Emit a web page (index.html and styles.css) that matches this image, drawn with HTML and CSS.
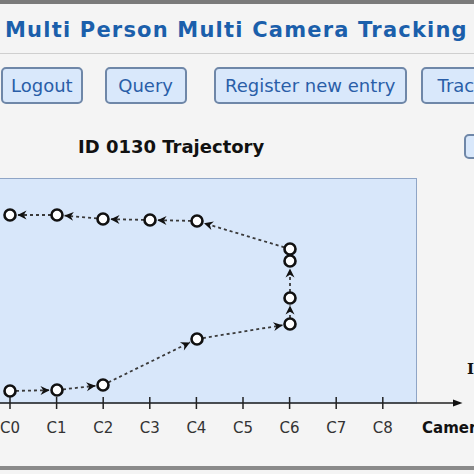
FILE: index.html
```html
<!DOCTYPE html>
<html>
<head>
<meta charset="utf-8">
<link rel="stylesheet" href="styles.css">
</head>
<body>
<div class="page">
  <header class="title-bar">
    <h1 class="title">Multi Person Multi Camera Tracking</h1>
  </header>
  <nav class="nav">
    <button class="btn btn-logout">Logout</button>
    <button class="btn btn-query">Query</button>
    <button class="btn btn-register">Register new entry</button>
    <button class="btn btn-track">Track</button>
  </nav>
  <div class="panel-head">
    <h2 class="panel-title">ID 0130 Trajectory</h2>
    <button class="btn btn-small"></button>
  </div>
  <svg class="chart" width="474" height="307" viewBox="0 160 474 307">
    <defs>
      <marker id="arr" markerUnits="userSpaceOnUse" markerWidth="12" markerHeight="12" refX="10" refY="6" orient="auto">
        <path d="M1,1.5 L10,6 L1,10.5 L3.8,6 Z" fill="#111"/>
      </marker>
    </defs>
    <rect class="plot-bg" x="-2" y="179.5" width="418.5" height="224.5"/>
    <g class="edges">
      <line x1="10" y1="392" x2="49.5" y2="391.2" marker-end="url(#arr)"/>
      <line x1="57" y1="391" x2="95.5" y2="386.8" marker-end="url(#arr)"/>
      <line x1="103" y1="386" x2="190" y2="343.4" marker-end="url(#arr)"/>
      <line x1="197" y1="340" x2="282.5" y2="326.2" marker-end="url(#arr)"/>
      <line x1="290" y1="325" x2="290" y2="306.5" marker-end="url(#arr)"/>
      <line x1="290" y1="299" x2="290" y2="269.5" marker-end="url(#arr)"/>
      <line x1="290" y1="250" x2="204" y2="224.2" marker-end="url(#arr)"/>
      <line x1="197" y1="222" x2="157.5" y2="221.2" marker-end="url(#arr)"/>
      <line x1="150" y1="221" x2="110.5" y2="220.2" marker-end="url(#arr)"/>
      <line x1="103" y1="220" x2="64.5" y2="216.6" marker-end="url(#arr)"/>
      <line x1="57" y1="216" x2="17.5" y2="216" marker-end="url(#arr)"/>
    </g>
    <g class="nodes">
      <circle cx="10" cy="216" r="5.5"/>
      <circle cx="57" cy="216" r="5.5"/>
      <circle cx="103" cy="220" r="5.5"/>
      <circle cx="150" cy="221" r="5.5"/>
      <circle cx="197" cy="222" r="5.5"/>
      <circle cx="290" cy="250" r="5.5"/>
      <circle cx="290" cy="262" r="5.5"/>
      <circle cx="290" cy="299" r="5.5"/>
      <circle cx="290" cy="325" r="5.5"/>
      <circle cx="197" cy="340" r="5.5"/>
      <circle cx="103" cy="386" r="5.5"/>
      <circle cx="57" cy="391" r="5.5"/>
      <circle cx="10" cy="392" r="5.5"/>
    </g>
    <g class="axis">
      <line x1="-2" y1="404" x2="456" y2="404"/>
      <path class="arrowhead" d="M453,400.5 L462.5,404 L453,407.5 Z"/>
      <line x1="10" y1="398" x2="10" y2="410"/>
      <line x1="56.6" y1="398" x2="56.6" y2="410"/>
      <line x1="103.2" y1="398" x2="103.2" y2="410"/>
      <line x1="149.8" y1="398" x2="149.8" y2="410"/>
      <line x1="196.4" y1="398" x2="196.4" y2="410"/>
      <line x1="243" y1="398" x2="243" y2="410"/>
      <line x1="289.6" y1="398" x2="289.6" y2="410"/>
      <line x1="336.2" y1="398" x2="336.2" y2="410"/>
      <line x1="382.8" y1="398" x2="382.8" y2="410"/>
    </g>
    <g class="tick-labels">
      <text x="10" y="434">C0</text>
      <text x="56.6" y="434">C1</text>
      <text x="103.2" y="434">C2</text>
      <text x="149.8" y="434">C3</text>
      <text x="196.4" y="434">C4</text>
      <text x="243" y="434">C5</text>
      <text x="289.6" y="434">C6</text>
      <text x="336.2" y="434">C7</text>
      <text x="382.8" y="434">C8</text>
    </g>
    <text class="axis-title" x="422" y="434">Camera</text>
    <text class="legend-glyph" x="467" y="375">I</text>
  </svg>
  <div class="footer-line"></div>
</div>
</body>
</html>
```

FILE: styles.css
```css
html, body {
  margin: 0;
  padding: 0;
  background: #f4f4f4;
  width: 474px;
  height: 474px;
  overflow: hidden;
}

.page {
  width: 474px;
  height: 474px;
  overflow: hidden;
  border-top: 4px solid #7a7a7a;
  box-sizing: border-box;
  font-family: "DejaVu Sans", Verdana, sans-serif;
}

.title-bar {
  height: 50px;
  box-sizing: border-box;
  padding: 2px 0 0 5px;
  border-bottom: 1px solid #cfcfcf;
}

.title {
  margin: 0;
  font-size: 21px;
  letter-spacing: 1.2px;
  line-height: 48px;
  font-weight: bold;
  color: #1b5fab;
  white-space: nowrap;
}

.nav {
  display: flex;
  margin-top: 13px;
  padding-left: 1px;
  white-space: nowrap;
}

.btn {
  height: 37px;
  box-sizing: border-box;
  min-width: 81px;
  padding: 0 8px;
  border: 2px solid #6f87a8;
  border-radius: 5px;
  background: #d9e8fb;
  color: #2a5ea8;
  font-family: "DejaVu Sans", Verdana, sans-serif;
  font-size: 18px;
  line-height: 33px;
  text-align: center;
  flex-shrink: 0;
}

.btn-query { margin-left: 22px; min-width: 82px; }
.btn-register { margin-left: 27px; width: 193px; }
.btn-track { margin-left: 14px; }

.panel-head {
  display: flex;
  align-items: center;
  margin-top: 30px;
  height: 25px;
  overflow: hidden;
}

.panel-title {
  margin: 0;
  padding-left: 78px;
  font-size: 18px;
  line-height: 25px;
  font-weight: bold;
  color: #111;
  white-space: nowrap;
}

.btn-small {
  margin-left: auto;
  margin-right: -20px;
  width: 30px;
  min-width: 30px;
  height: 25px;
  padding: 0;
}

.chart {
  display: block;
}

.plot-bg {
  fill: #d8e7fa;
  stroke: #8fa5c6;
  stroke-width: 1;
}

.edges line {
  stroke: #3a3a3a;
  stroke-width: 1.8;
  stroke-dasharray: 3 3;
}

.nodes circle {
  fill: #ffffff;
  stroke: #111;
  stroke-width: 2.6;
}

.axis line {
  stroke: #222;
  stroke-width: 1.5;
}

.arrowhead {
  fill: #111;
}

.tick-labels text {
  font-family: "DejaVu Sans", Verdana, sans-serif;
  font-size: 15px;
  fill: #333;
  text-anchor: middle;
}

.axis-title {
  font-family: "DejaVu Sans", Verdana, sans-serif;
  font-size: 15px;
  font-weight: bold;
  fill: #111;
}

.legend-glyph {
  font-family: "DejaVu Serif", serif;
  font-size: 15px;
  font-weight: bold;
  fill: #111;
}

.footer-line {
  height: 4px;
  background: #8a8a8a;
}
```
